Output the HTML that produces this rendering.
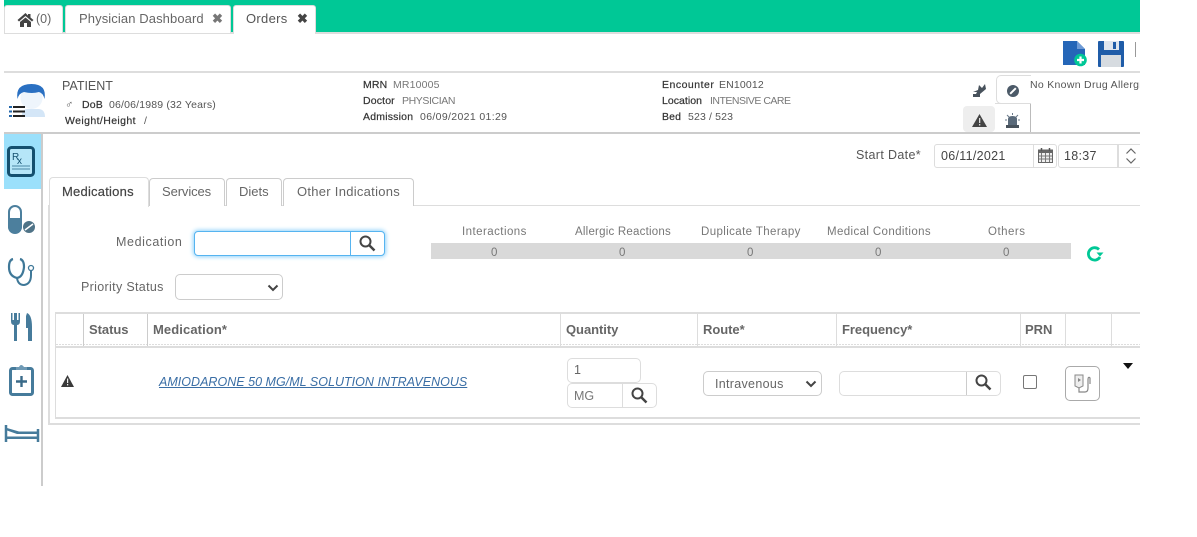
<!DOCTYPE html>
<html><head><meta charset="utf-8"><style>
html,body{margin:0;padding:0;background:#fff}
#p{position:relative;width:1197px;height:537px;overflow:hidden;background:#fff;font-family:"Liberation Sans",sans-serif;color:#555}
#c{position:absolute;left:0;top:0;width:1140px;height:537px;overflow:hidden;filter:blur(.3px)}
.t{position:absolute;white-space:nowrap;line-height:16px;font-size:12.5px}
.b{position:absolute;box-sizing:border-box}
.s{font-size:10.5px;letter-spacing:.15px;color:#555}
.k{color:#333;font-weight:400;-webkit-text-stroke:.2px #333}
.h{font-size:13px;color:#666;font-weight:700;letter-spacing:-.05px}
.g{color:#777}
svg{position:absolute;overflow:visible}
</style></head><body><div id="p"><div id="c">

<div class="b" style="left:4px;top:0;width:1136px;height:32px;background:#00c896"></div>
<div class="b" style="left:4px;top:32px;width:1136px;height:2px;background:#ddd"></div>

<div class="b" style="left:4px;top:5px;width:59px;height:28px;background:#fff;border:1px solid #ddd;border-bottom:0;border-radius:3px 3px 0 0"></div>
<div class="b" style="left:65px;top:5px;width:166px;height:28px;background:#fff;border:1px solid #ddd;border-bottom:0;border-radius:3px 3px 0 0"></div>
<div class="b" style="left:233px;top:5px;width:83px;height:29px;background:#fff;border:1px solid #ddd;border-bottom:0;border-radius:3px 3px 0 0"></div>
<svg style="left:17px;top:13px" width="17" height="14" viewBox="0 0 16 14"><path d="M8 0 L0 7 L1.500 8.500 L8 3 L14.500 8.500 L16 7 L13 4.500 V1 H10.500 V2.500 Z M2.500 9 L8 4.500 L13.500 9 V14 H9.500 V10 H6.500 V14 H2.500 Z" fill="#444"/></svg>
<div class="t" style="left:36px;top:11px;color:#666">(0)</div>
<div class="t" style="left:79px;top:11px;font-size:13px;letter-spacing:.1px;color:#666">Physician Dashboard</div>
<div class="t" style="left:212px;top:11px;font-size:13px;color:#777;font-weight:700">✖</div>
<div class="t" style="left:246px;top:11px;font-size:13px;letter-spacing:.3px;color:#555">Orders</div>
<div class="t" style="left:297px;top:11px;font-size:13px;color:#444;font-weight:700">✖</div>

<svg style="left:1063px;top:41px" width="24" height="26" viewBox="0 0 24 26"><path d="M0 0 H14 L22 8 V24 H0 Z" fill="#2566b8"/><path d="M14 0 L22 8 H14 Z" fill="#6f9bd6"/><circle cx="17.500" cy="19" r="6.300" fill="#00c896"/><path d="M17.500 15.500 V22.500 M14 19 H21" stroke="#fff" stroke-width="2.200"/></svg>
<svg style="left:1098px;top:41px" width="26" height="26" viewBox="0 0 26 26"><rect width="26" height="26" rx="1" fill="#1f5ca8"/><rect x="6" y="0" width="15" height="9" fill="#dfe6ee"/><rect x="15" y="1" width="3" height="7" fill="#1f5ca8"/><rect x="3" y="14" width="20" height="12" fill="#d6dbe0"/></svg>
<div class="b" style="left:1135px;top:42px;width:1px;height:15px;background:#999"></div>

<div class="b" style="left:4px;top:71px;width:1136px;height:2px;background:#ddd"></div>
<div class="b" style="left:4px;top:132px;width:1136px;height:2px;background:#ccc"></div>

<svg style="left:8px;top:83px" width="40" height="36" viewBox="0 0 40 36"><path d="M14 34 Q13 26 20 26 H30 Q37 26 37 34 Z" fill="#d4e6f7"/><circle cx="23.500" cy="15" r="11" fill="#eef5fc"/><path d="M9.500 16 Q7 1 23.500 1 Q39 1 36.500 16 Q35 10 31 9 Q24 11 16 9 Q11 10 9.500 16 Z" fill="#2a70c2"/><rect x="1" y="23" width="3" height="2" fill="#26a"/><rect x="1" y="27.500" width="3" height="2" fill="#26a"/><rect x="1" y="32" width="3" height="2" fill="#26a"/><rect x="5" y="23" width="12" height="2" fill="#222"/><rect x="5" y="27.500" width="12" height="2" fill="#222"/><rect x="5" y="32" width="12" height="2" fill="#222"/></svg>

<div class="t" style="left:62px;top:78px;font-size:12.500px;color:#555">PATIENT</div>
<div class="t s" style="left:65px;top:97px;font-size:11px">♂</div>
<div class="t s k" style="left:82px;top:97px">DoB</div>
<div class="t s" style="left:109px;top:97px;letter-spacing:.17px">06/06/1989 (32 Years)</div>
<div class="t s k" style="left:65px;top:113px;letter-spacing:.4px">Weight/Height</div>
<div class="t s" style="left:144px;top:113px">/</div>

<div class="t s k" style="left:363px;top:77px">MRN</div><div class="t s g" style="left:393px;top:77px">MR10005</div>
<div class="t s k" style="left:363px;top:93px">Doctor</div><div class="t s g" style="left:402px;top:93px;letter-spacing:-.4px">PHYSICIAN</div>
<div class="t s k" style="left:363px;top:109px;letter-spacing:.2px">Admission</div><div class="t s" style="left:420px;top:109px;letter-spacing:.35px">06/09/2021 01:29</div>
<div class="t s k" style="left:662px;top:77px;letter-spacing:.5px">Encounter</div><div class="t s" style="left:719px;top:77px">EN10012</div>
<div class="t s k" style="left:662px;top:93px;letter-spacing:.03px">Location</div><div class="t s g" style="left:710px;top:93px;letter-spacing:-.5px">INTENSIVE CARE</div>
<div class="t s k" style="left:662px;top:109px">Bed</div><div class="t s" style="left:688px;top:109px">523 / 523</div>

<div class="b" style="left:964px;top:76px;width:32px;height:27px;background:#fff;border-radius:3px"></div>
<svg style="left:971px;top:83px" width="16" height="15" viewBox="0 0 16 15"><path d="M2 14 H9 V11 L15 6 L14 1 L11 5 L8 2 L7 7 L2 9 H6 L5 11 H2 Z" fill="#48525c"/></svg>
<div class="b" style="left:996px;top:75px;width:35px;height:29px;border:1px solid #ddd;border-radius:5px 0 0 5px;border-right:0;background:#fff"></div>
<div class="b" style="left:1007px;top:85px;width:12px;height:12px;border-radius:50%;background:#4c5a68"></div>
<div class="b" style="left:1009px;top:90px;width:8px;height:2px;background:#fff;transform:rotate(-45deg)"></div>
<div class="b" style="left:963px;top:106px;width:32px;height:26px;background:#eee;border-radius:4px"></div>
<svg style="left:972px;top:114px" width="15" height="13" viewBox="0 0 15 13"><path d="M7.500 0 L15 13 H0 Z" fill="#444"/><rect x="7" y="4" width="1.300" height="5" fill="#ddd"/><rect x="7" y="10" width="1.300" height="1.500" fill="#ddd"/></svg>
<svg style="left:1005px;top:113px" width="15" height="15" viewBox="0 0 15 15"><path d="M3 6 Q3 3 7.500 3 Q12 3 12 6 V12 H3 Z" fill="#5a6a7a"/><rect x="1" y="12" width="13" height="3" fill="#48525c"/><path d="M7.500 0 V2 M2 2 L4 4 M13 2 L11 4 M0 7 H2 M13 7 H15" stroke="#6a7a8a"/></svg>
<div class="b" style="left:1030px;top:103px;width:1px;height:29px;background:#bbb"></div>
<div class="b" style="left:995px;top:103px;width:36px;height:1px;background:#ddd"></div>
<div class="t" style="left:1030px;top:77px;font-size:10.500px;letter-spacing:.3px;color:#555">No Known Drug Allergies</div>

<!-- sidebar -->
<div class="b" style="left:4px;top:134px;width:37px;height:55px;background:#9be0fb"></div>
<div class="b" style="left:41px;top:134px;width:2px;height:352px;background:#ccc"></div>
<svg style="left:7px;top:146px" width="28" height="32" viewBox="0 0 28 32"><rect x="1.500" y="1.500" width="25" height="28" rx="3" fill="#b6e6f8" stroke="#14506f" stroke-width="3"/><path d="M5 20 H23 M5 23 H23" stroke="#4b85a5"/></svg>
<div class="t" style="left:12px;top:150px;font-size:10px;color:#14506f">R</div>
<div class="t" style="left:17px;top:154px;font-size:10px;color:#14506f">x</div>
<svg style="left:8px;top:205px" width="28" height="29" viewBox="0 0 28 29"><rect x="1" y="1" width="12" height="26" rx="6" fill="#fff" stroke="#4c7f9d" stroke-width="2"/><path d="M0 13 H14 V22 A7 7 0 0 1 0 22 Z" fill="#4c7f9d"/><circle cx="21" cy="22" r="6" fill="#4f7387"/><path d="M17 25 L25 19" stroke="#fff" stroke-width="1.500"/></svg>
<svg style="left:8px;top:257px" width="27" height="30" viewBox="0 0 27 30"><path d="M5 2 Q1 3 1 10 Q1 19 9 21 Q15 20 16 10 Q16 3 12 2" fill="none" stroke="#3f7898" stroke-width="2.200"/><path d="M9 21 Q10 28 16 28 Q23 27 23 18 V14" fill="none" stroke="#3f7898" stroke-width="2"/><circle cx="23" cy="11" r="2.500" fill="#fff" stroke="#3f7898" stroke-width="1.300"/></svg>
<svg style="left:10px;top:313px" width="24" height="29" viewBox="0 0 24 29"><path d="M1 0 V8 Q1 12 4 12 V28 H7 V12 Q10 12 10 8 V0 H8.500 V7 H7 V0 H4 V7 H2.500 V0 Z" fill="#467b9b"/><path d="M17 0 Q22 2 22 14 V28 H18 V15 H16 V3 Z" fill="#467b9b"/></svg>
<svg style="left:9px;top:363px" width="25" height="33" viewBox="0 0 25 33"><rect x="1.500" y="5.500" width="22" height="26" rx="2" fill="#fff" stroke="#467b9b" stroke-width="3"/><path d="M7 7 V4 H10 Q12 0 15 4 H18 V7 Z" fill="#6f9ab5"/><path d="M12.500 13 V24 M7 18.500 H18" stroke="#3a6a88" stroke-width="2.400"/></svg>
<svg style="left:5px;top:425px" width="34" height="18" viewBox="0 0 34 18"><path d="M1 0 V17 M33 4 V17" stroke="#467b9b" stroke-width="2.500" fill="none"/><path d="M2 3 L14 6.500 H32 V9 H12 L2 5.500 Z M2 11.500 H32 V14 H2 Z" fill="#467b9b"/></svg>

<!-- start date -->
<div class="t" style="left:856px;top:147px;font-size:12.500px;letter-spacing:.35px;color:#555">Start Date*</div>
<div class="b" style="left:934px;top:144px;width:100px;height:24px;border:1px solid #ddd;border-radius:3px 0 0 3px"></div>
<div class="t" style="left:941px;top:148px;font-size:12.500px;letter-spacing:.3px;color:#444">06/11/2021</div>
<div class="b" style="left:1033px;top:144px;width:24px;height:24px;border:1px solid #ddd;border-radius:0 3px 3px 0"></div>
<svg style="left:1038px;top:148px" width="15" height="15" viewBox="0 0 15 15"><rect x=".5" y="2" width="14" height="12.500" fill="#eee" stroke="#666"/><rect x=".5" y="2" width="14" height="3" fill="#666"/><path d="M3.500 5 V14 M7.500 5 V14 M11.500 5 V14 M1 8 H14 M1 11 H14" stroke="#777"/><path d="M3.500 0 V3 M11.500 0 V3" stroke="#555" stroke-width="1.500"/></svg>
<div class="b" style="left:1058px;top:144px;width:60px;height:24px;border:1px solid #ddd;border-radius:3px 0 0 3px"></div>
<div class="t" style="left:1064px;top:148px;font-size:12.500px;letter-spacing:.3px;color:#444">18:37</div>
<div class="b" style="left:1118px;top:144px;width:30px;height:24px;border:1px solid #ddd;border-radius:0 3px 3px 0"></div>
<svg style="left:1125px;top:148px" width="12" height="16" viewBox="0 0 12 16"><path d="M1.500 5.500 L6 1 L10.500 5.500 M1.500 10.500 L6 15 L10.500 10.500" fill="none" stroke="#666" stroke-width="1.200"/></svg>

<!-- tabs panel -->
<div class="b" style="left:48px;top:205px;width:1100px;height:220px;border:1px solid #ddd;border-width:1px 0 2px 2px"></div>
<div class="b" style="left:49px;top:177px;width:100px;height:30px;background:#fff;border:1px solid #ddd;border-bottom:0;border-radius:4px 4px 0 0"></div>
<div class="b" style="left:149px;top:178px;width:76px;height:28px;background:#fff;border:1px solid #ccc;border-bottom:0;border-radius:4px 4px 0 0"></div>
<div class="b" style="left:226px;top:178px;width:56px;height:28px;background:#fff;border:1px solid #ccc;border-bottom:0;border-radius:4px 4px 0 0"></div>
<div class="b" style="left:283px;top:178px;width:131px;height:28px;background:#fff;border:1px solid #ccc;border-bottom:0;border-radius:4px 4px 0 0"></div>
<div class="t" style="left:62px;top:184px;font-size:13px;letter-spacing:.22px;color:#444;-webkit-text-stroke:.2px #444">Medications</div>
<div class="t" style="left:162px;top:184px;font-size:13px;letter-spacing:-.1px;color:#666">Services</div>
<div class="t" style="left:239px;top:184px;font-size:13px;color:#666">Diets</div>
<div class="t" style="left:297px;top:184px;font-size:13px;letter-spacing:.28px;color:#666">Other Indications</div>

<div class="t" style="left:116px;top:234px;font-size:12.500px;letter-spacing:.6px;color:#666">Medication</div>
<div class="b" style="left:194px;top:231px;width:191px;height:25px;border:1px solid #56b4f0;border-radius:4px;box-shadow:0 0 4px 1px #90d2fa;background:#fff"></div>
<div class="b" style="left:350px;top:232px;width:1px;height:23px;background:#56b4f0"></div>
<svg style="left:359px;top:235px" width="17" height="17" viewBox="0 0 17 17"><circle cx="6.500" cy="6.500" r="5" fill="none" stroke="#444" stroke-width="2"/><path d="M10.500 10.500 L15.500 15.500" stroke="#444" stroke-width="2.500"/></svg>

<div class="t" style="left:81px;top:279px;font-size:12.500px;letter-spacing:.33px;color:#666">Priority Status</div>
<div class="b" style="left:175px;top:274px;width:108px;height:26px;border:1px solid #ccc;border-radius:5px;background:#fff"></div>
<svg style="left:267px;top:284px" width="12" height="8" viewBox="0 0 12 8"><path d="M1.500 1.500 L6 6 L10.500 1.500" fill="none" stroke="#444" stroke-width="2"/></svg>

<!-- stats -->
<div class="b" style="left:431px;top:243px;width:640px;height:16px;background:#d9d9d9"></div>
<div class="t" style="left:462px;top:224px;font-size:11.500px;letter-spacing:.45px;color:#777">Interactions</div>
<div class="t" style="left:575px;top:224px;font-size:11.500px;letter-spacing:.22px;color:#777">Allergic Reactions</div>
<div class="t" style="left:701px;top:224px;font-size:11.500px;letter-spacing:.39px;color:#777">Duplicate Therapy</div>
<div class="t" style="left:827px;top:224px;font-size:11.500px;letter-spacing:.38px;color:#777">Medical Conditions</div>
<div class="t" style="left:988px;top:224px;font-size:11.500px;letter-spacing:.5px;color:#777">Others</div>
<div class="t" style="left:491px;top:245px;font-size:11.500px;color:#777">0</div>
<div class="t" style="left:619px;top:245px;font-size:11.500px;color:#777">0</div>
<div class="t" style="left:747px;top:245px;font-size:11.500px;color:#777">0</div>
<div class="t" style="left:875px;top:245px;font-size:11.500px;color:#777">0</div>
<div class="t" style="left:1003px;top:245px;font-size:11.500px;color:#777">0</div>
<svg style="left:1086px;top:246px" width="18" height="16" viewBox="0 0 18 16"><path d="M13 3.500 A6.200 6.200 0 1 0 14 11" fill="none" stroke="#00c896" stroke-width="2.800"/><path d="M10.500 6.500 H17.500 L14 10.500 Z" fill="#00c896"/></svg>

<!-- table -->
<div class="b" style="left:55px;top:312px;width:1090px;height:107px;border:1px solid #ddd;border-width:2px 0 2px 1px"></div>
<div class="b" style="left:55px;top:346px;width:1090px;height:2px;background:#ddd"></div>
<div class="b" style="left:56px;top:344px;width:1090px;height:1px;background:repeating-linear-gradient(90deg,#ddd 0 2px,#fff 2px 3px)"></div>
<div class="b" style="left:83px;top:314px;width:1px;height:32px;background:#ccc"></div>
<div class="b" style="left:147px;top:314px;width:1px;height:32px;background:#ccc"></div>
<div class="b" style="left:560px;top:314px;width:1px;height:32px;background:#ddd"></div>
<div class="b" style="left:697px;top:314px;width:1px;height:32px;background:#ddd"></div>
<div class="b" style="left:836px;top:314px;width:1px;height:32px;background:#ddd"></div>
<div class="b" style="left:1020px;top:314px;width:1px;height:32px;background:#ddd"></div>
<div class="b" style="left:1065px;top:314px;width:1px;height:32px;background:#ddd"></div>
<div class="b" style="left:1111px;top:314px;width:1px;height:32px;background:#ddd"></div>
<div class="t h" style="left:89px;top:322px">Status</div>
<div class="t h" style="left:153px;top:322px;letter-spacing:.1px">Medication*</div>
<div class="t h" style="left:566px;top:322px">Quantity</div>
<div class="t h" style="left:703px;top:322px">Route*</div>
<div class="t h" style="left:842px;top:322px">Frequency*</div>
<div class="t h" style="left:1025px;top:322px">PRN</div>

<svg style="left:61px;top:375px" width="13" height="12" viewBox="0 0 13 12"><path d="M6.500 0 L13 12 H0 Z" fill="#3a3a3a"/><rect x="6" y="3.500" width="1.200" height="4.500" fill="#eee"/><rect x="6" y="9" width="1.200" height="1.400" fill="#eee"/></svg>
<div class="t" style="left:159px;top:374px;font-size:12.500px;font-style:italic;letter-spacing:.02px;color:#3a6ea5;text-decoration:underline">AMIODARONE 50 MG/ML SOLUTION INTRAVENOUS</div>

<div class="b" style="left:567px;top:358px;width:74px;height:25px;border:1px solid #ddd;border-radius:5px"></div>
<div class="t" style="left:574px;top:362px;font-size:12.500px;color:#666">1</div>
<div class="b" style="left:567px;top:383px;width:90px;height:25px;border:1px solid #ddd;border-radius:5px"></div>
<div class="b" style="left:622px;top:384px;width:1px;height:23px;background:#ddd"></div>
<div class="t" style="left:574px;top:388px;font-size:12.500px;color:#777">MG</div>
<svg style="left:631px;top:387px" width="17" height="17" viewBox="0 0 17 17"><circle cx="6.500" cy="6.500" r="5" fill="none" stroke="#444" stroke-width="2"/><path d="M10.500 10.500 L15.500 15.500" stroke="#444" stroke-width="2.500"/></svg>

<div class="b" style="left:703px;top:371px;width:119px;height:25px;border:1px solid #ccc;border-radius:5px"></div>
<div class="t" style="left:715px;top:376px;font-size:12.500px;letter-spacing:.3px;color:#666">Intravenous</div>
<svg style="left:805px;top:380px" width="12" height="8" viewBox="0 0 12 8"><path d="M1.500 1.500 L6 6 L10.500 1.500" fill="none" stroke="#444" stroke-width="2"/></svg>

<div class="b" style="left:839px;top:371px;width:162px;height:25px;border:1px solid #ddd;border-radius:5px"></div>
<div class="b" style="left:966px;top:372px;width:1px;height:23px;background:#ccc"></div>
<svg style="left:975px;top:374px" width="17" height="17" viewBox="0 0 17 17"><circle cx="6.500" cy="6.500" r="5" fill="none" stroke="#444" stroke-width="2"/><path d="M10.500 10.500 L15.500 15.500" stroke="#444" stroke-width="2.500"/></svg>
<div class="b" style="left:1023px;top:375px;width:14px;height:14px;border:1px solid #777;border-radius:2px"></div>
<div class="b" style="left:1065px;top:366px;width:35px;height:35px;border:1px solid #aaa;border-radius:5px"></div>
<svg style="left:1074px;top:374px" width="18" height="20" viewBox="0 0 18 20"><path d="M1 1 H9 V12 L5 14 L1 12 Z" fill="#eee" stroke="#888"/><path d="M5 14 V18 H11 Q14 18 14 14 V6 Q14 2 16 4 V10" fill="none" stroke="#888" stroke-width="1.200"/><path d="M4 4 L7 6 L4 8 Z" fill="#888"/></svg>
<div class="b" style="left:1123px;top:363px;width:0;height:0;border:5px solid transparent;border-top:6px solid #111;border-bottom:0"></div>

</div></div></body></html>
